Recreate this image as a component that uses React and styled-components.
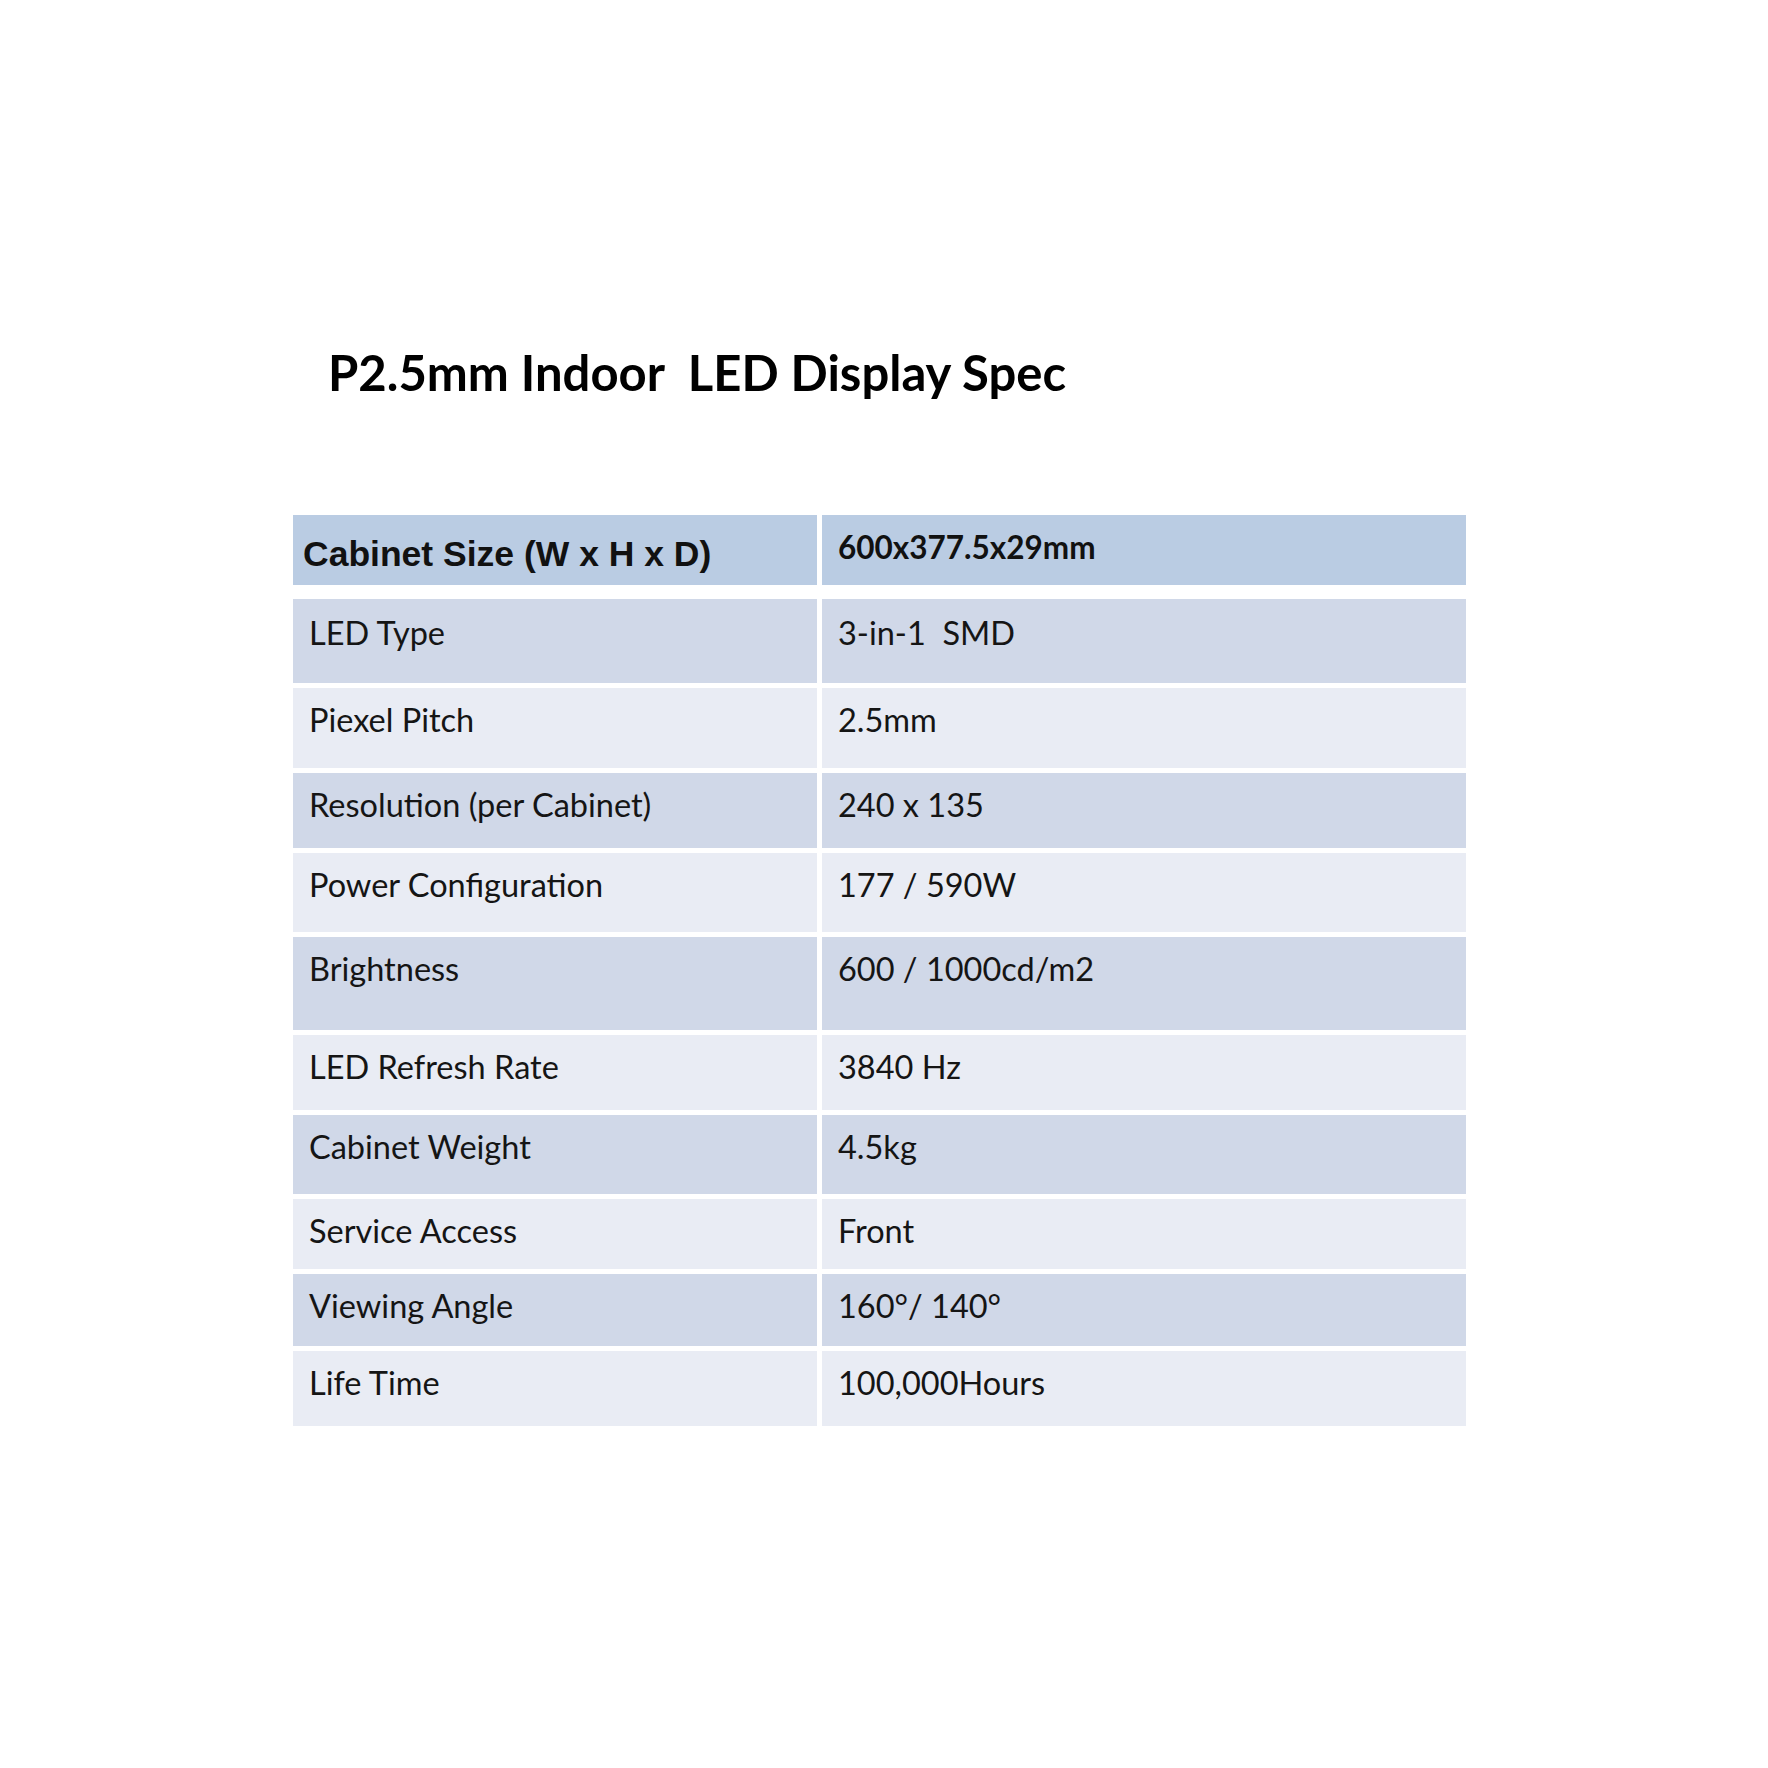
import React from 'react';
import styled, { createGlobalStyle } from 'styled-components';

const SPECS = [
  { label: 'LED Type', value: '3-in-1  SMD', height: 84, top: 15 },
  { label: 'Piexel Pitch', value: '2.5mm', height: 80 },
  { label: 'Resolution (per Cabinet)', value: '240 x 135', height: 75 },
  { label: 'Power Configuration', value: '177 / 590W', height: 79 },
  { label: 'Brightness', value: '600 / 1000cd/m2', height: 93 },
  { label: 'LED Refresh Rate', value: '3840 Hz', height: 75 },
  { label: 'Cabinet Weight', value: '4.5kg', height: 79 },
  { label: 'Service Access', value: 'Front', height: 70 },
  { label: 'Viewing Angle', value: '160°/ 140°', height: 72 },
  { label: 'Life Time', value: '100,000Hours', height: 75 },
];

const GlobalStyle = createGlobalStyle`
  html, body {
    margin: 0;
    padding: 0;
    background: #ffffff;
  }
  body {
    font-family: Lato, "Open Sans", sans-serif;
    color: #111111;
  }
`;

const Page = styled.div`
  width: 1768px;
  min-height: 1768px;
  padding: 342px 0 0 293px;
  box-sizing: border-box;
`;

const Title = styled.h1`
  margin: 0 0 0 35px;
  font-family: Lato, "Open Sans", sans-serif;
  font-weight: 700;
  font-size: 49px;
  line-height: 60px;
  color: #000000;
  white-space: pre;
`;

const Table = styled.div`
  margin-top: 113px;
  display: grid;
  grid-template-columns: 524px 644px;
  column-gap: 5px;
  row-gap: 5px;
`;

const HeadCell = styled.div`
  height: 70px;
  background: #bacce3;
  box-sizing: border-box;
  padding: ${(p) => (p.$value ? '13px 0 0 16px' : '20px 0 0 10px')};
  font-family: ${(p) =>
    p.$value ? 'Lato, "Open Sans", sans-serif' : '"Liberation Sans", Arial, sans-serif'};
  font-weight: 700;
  font-size: ${(p) => (p.$value ? '31.5px' : '35.5px')};
  line-height: 38px;
  color: #111111;
  margin-bottom: 9px;
`;

const Cell = styled.div`
  height: ${(p) => p.$height}px;
  background: ${(p) => (p.$dark ? '#d0d8e8' : '#e9ecf4')};
  box-sizing: border-box;
  padding: ${(p) => p.$top}px 0 0 16px;
  font-size: 32.5px;
  line-height: 38px;
  color: #151515;
  white-space: pre;
`;

export default function App() {
  return (
    <>
      <GlobalStyle />
      <Page>
        <Title>{'P2.5mm Indoor  LED Display Spec'}</Title>
        <Table>
          <HeadCell>Cabinet Size (W x H x D)</HeadCell>
          <HeadCell $value>600x377.5x29mm</HeadCell>
          {SPECS.map((row, i) => (
            <React.Fragment key={row.label}>
              <Cell $height={row.height} $dark={i % 2 === 0} $top={row.top || 13}>
                {row.label}
              </Cell>
              <Cell $height={row.height} $dark={i % 2 === 0} $top={row.top || 13}>
                {row.value}
              </Cell>
            </React.Fragment>
          ))}
        </Table>
      </Page>
    </>
  );
}
